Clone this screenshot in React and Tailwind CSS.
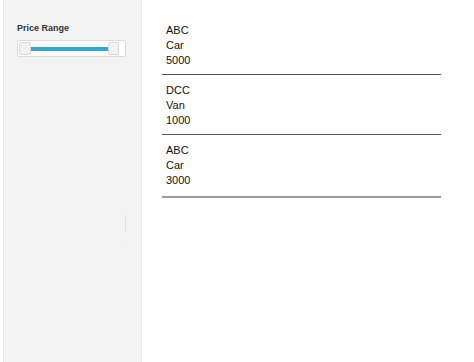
import React from "react";

const items = [
  { name: "ABC", type: "Car", price: 5000 },
  { name: "DCC", type: "Van", price: 1000 },
  { name: "ABC", type: "Car", price: 3000 },
];

export default function App() {
  return (
    <div className="flex h-[362px] w-[474px] bg-white font-['Liberation_Sans',Arial,sans-serif] text-[#111]">
      <aside className="ml-[3px] flex w-[139px] shrink-0 flex-col border-l border-r border-[#e6e6e6] bg-[#f3f3f3] pl-[13px] pr-[14px] pt-[22px]">
        <h3 className="text-[9px] font-bold leading-[12px] text-[#333]">Price Range</h3>
        <div className="mt-[6px] flex h-[17px] w-[109px] items-center rounded-[2px] border border-[#dcdcdc] bg-white pl-px pr-[6px]">
          <span className="h-[13px] w-[12px] rounded-[2px] border border-[#dadada] bg-[#f2f2f2]" />
          <span className="h-[4px] flex-1 bg-[#3aa3cc]" />
          <span className="h-[13px] w-[11px] rounded-[2px] border border-[#dadada] bg-[#f2f2f2]" />
        </div>
        <div className="ml-[108px] mt-[158px] h-[17px] w-px bg-[#e2e2e2]" />
        <div className="ml-[108px] mt-[8px] h-[2px] w-px bg-[#e6e6e6]" />
      </aside>
      <main className="ml-[20px] w-[279px] pt-[15px]">
        {items.map((item, key) => (
          <div
            key={key}
            className={
              key === items.length - 1
                ? "border-b-2 border-[#9a9a9a] pb-[8px] pl-[4px] pt-[8px] text-[11px] leading-[15px]"
                : "border-b border-[#555] pb-[6px] pl-[4px] pt-[8px] text-[11px] leading-[15px]"
            }
          >
            <div>{item.name}</div>
            <div>{item.type}</div>
            <div>{item.price}</div>
          </div>
        ))}
      </main>
    </div>
  );
}
